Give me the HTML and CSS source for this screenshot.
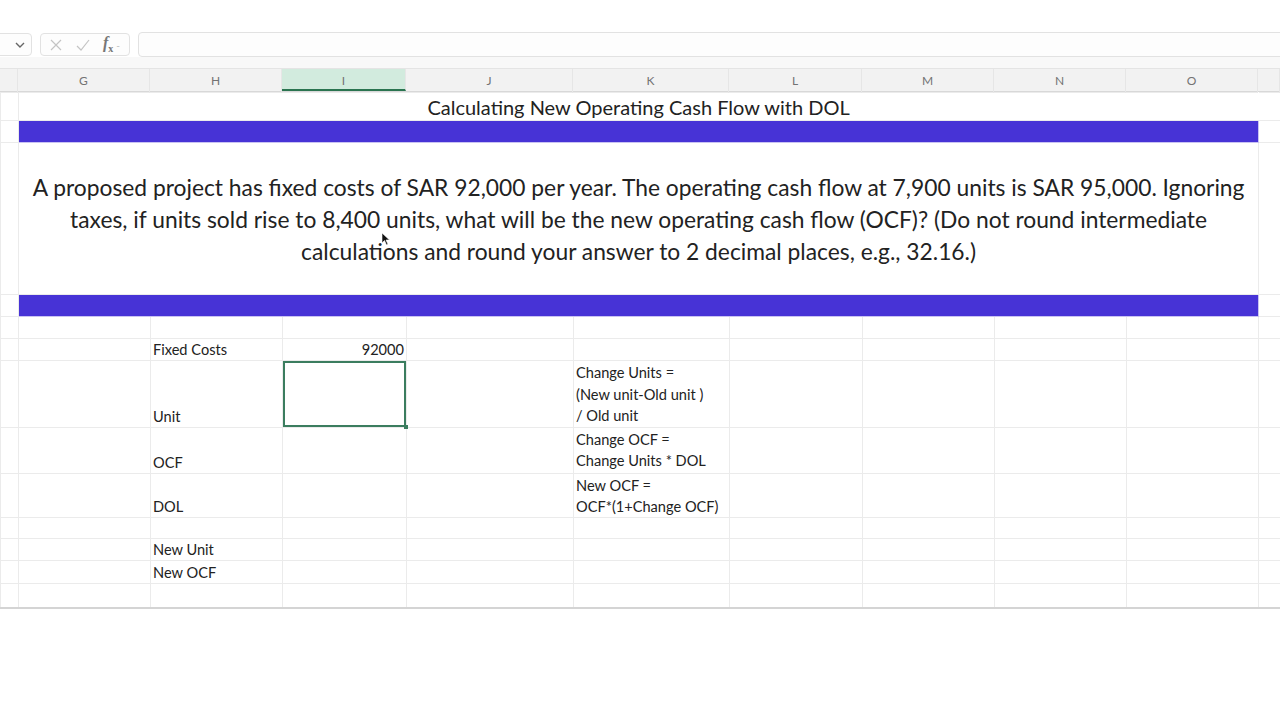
FILE: index.html
```html
<!DOCTYPE html>
<html lang="en">
<head>
    <meta charset="UTF-8">
    <meta name="viewport" content="width=device-width, initial-scale=1.0">
    <title>DOL - Operating Cash Flow</title>
    <link rel="stylesheet" href="styles.css">
</head>
<body>
    <div class="toolbar">
        <div class="name-box">
            <svg width="10" height="6" viewBox="0 0 10 6"><path d="M1 1 L5 5 L9 1" fill="none" stroke="#666" stroke-width="1.4"/></svg>
        </div>
        <div class="fx-box">
            <svg width="14" height="14" viewBox="0 0 14 14"><path d="M2 2 L12 12 M12 2 L2 12" stroke="#c4c4c4" stroke-width="1.2"/></svg>
            <svg width="16" height="14" viewBox="0 0 16 14"><path d="M2 8 L6 12 L14 2" fill="none" stroke="#c4c4c4" stroke-width="1.2"/></svg>
            <span class="fx"><i>f</i><sub>x</sub></span>
            <span class="fx-arrow">-</span>
        </div>
        <div class="formula-input"></div>
    </div>
    <div class="strip"></div>

    <div class="col-headers">
        <div class="col-head"></div>
        <div class="col-head">G</div>
        <div class="col-head">H</div>
        <div class="col-head active">I</div>
        <div class="col-head">J</div>
        <div class="col-head">K</div>
        <div class="col-head">L</div>
        <div class="col-head">M</div>
        <div class="col-head">N</div>
        <div class="col-head">O</div>
        <div class="col-head"></div>
    </div>

    <table class="sheet">
        <colgroup>
            <col style="width:18px"><col style="width:132px"><col style="width:132px"><col style="width:124px">
            <col style="width:167px"><col style="width:156px"><col style="width:133px"><col style="width:132px">
            <col style="width:132px"><col style="width:132px"><col style="width:22px">
        </colgroup>
        <tr class="r-title">
            <td></td>
            <td colspan="9" class="title">Calculating New Operating Cash Flow with DOL</td>
            <td></td>
        </tr>
        <tr class="r-band">
            <td></td>
            <td colspan="9" class="band"></td>
            <td></td>
        </tr>
        <tr class="r-question">
            <td></td>
            <td colspan="9" class="question">
                A proposed project has fixed costs of SAR 92,000 per year. The operating cash flow at 7,900 units is SAR 95,000. Ignoring<br>
                taxes, if units sold rise to 8,400 units, what will be the new operating cash flow (OCF)? (Do not round intermediate<br>
                calculations and round your answer to 2 decimal places, e.g., 32.16.)
            </td>
            <td></td>
        </tr>
        <tr class="r-band">
            <td></td>
            <td colspan="9" class="band"></td>
            <td></td>
        </tr>
        <tr class="r-22">
            <td></td><td></td><td></td><td></td><td></td><td></td><td></td><td></td><td></td><td></td><td></td>
        </tr>
        <tr class="r-22">
            <td></td><td></td><td>Fixed Costs</td><td class="num">92000</td><td></td><td></td><td></td><td></td><td></td><td></td><td></td>
        </tr>
        <tr class="r-unit">
            <td></td><td></td><td>Unit</td><td class="selected"></td><td></td>
            <td class="note">Change Units =<br>(New unit-Old unit )<br>/ Old unit</td>
            <td></td><td></td><td></td><td></td><td></td>
        </tr>
        <tr class="r-ocf">
            <td></td><td></td><td>OCF</td><td></td><td></td>
            <td class="note">Change OCF =<br>Change Units * DOL</td>
            <td></td><td></td><td></td><td></td><td></td>
        </tr>
        <tr class="r-dol">
            <td></td><td></td><td>DOL</td><td></td><td></td>
            <td class="note">New OCF =<br>OCF*(1+Change OCF)</td>
            <td></td><td></td><td></td><td></td><td></td>
        </tr>
        <tr class="r-21">
            <td></td><td></td><td></td><td></td><td></td><td></td><td></td><td></td><td></td><td></td><td></td>
        </tr>
        <tr class="r-22">
            <td></td><td></td><td>New Unit</td><td></td><td></td><td></td><td></td><td></td><td></td><td></td><td></td>
        </tr>
        <tr class="r-23">
            <td></td><td></td><td>New OCF</td><td></td><td></td><td></td><td></td><td></td><td></td><td></td><td></td>
        </tr>
        <tr class="r-24">
            <td></td><td></td><td></td><td></td><td></td><td></td><td></td><td></td><td></td><td></td><td></td>
        </tr>
    </table>

    <!-- mouse pointer resting over the question -->
    <svg class="pointer" width="10" height="14" viewBox="0 0 10 14">
        <path d="M1 1 L1 11 L3.5 8.5 L5.5 13 L7 12.3 L5 8 L8.5 8 Z" fill="#111" stroke="#fff" stroke-width="0.6"/>
    </svg>
</body>
</html>
```

FILE: styles.css
```css
body {
    margin: 0;
    background: #ffffff;
    font-family: 'Lato', 'Open Sans', sans-serif;
    color: #222;
    position: relative;
    overflow: hidden;
}
.toolbar {
    display: flex;
    align-items: center;
    gap: 8px;
    padding-top: 32px;
    height: 25px;
    margin-left: -4px;
}
.name-box, .fx-box, .formula-input {
    height: 23px;
    border: 1px solid #e2e2e2;
    border-radius: 4px;
    background: #fdfdfd;
    display: flex;
    align-items: center;
}
.name-box {
    width: 36px;
    justify-content: flex-end;
    padding-right: 6px;
    box-sizing: border-box;
}
.fx-box {
    width: 90px;
    box-sizing: border-box;
    padding-left: 8px;
    gap: 12px;
}
.fx {
    font-family: 'Liberation Serif', serif;
    font-size: 16px;
    color: #777;
    font-weight: bold;
}
.fx sub {
    font-size: 10px;
    font-style: normal;
}
.fx-arrow {
    color: #bbb;
    font-size: 10px;
    margin-left: -9px;
}
.formula-input {
    flex: 1;
    margin-right: -10px;
}
.strip {
    height: 11px;
    background: #f8f8f8;
}
.col-headers {
    display: grid;
    grid-template-columns: 18px 132px 132px 124px 167px 156px 133px 132px 132px 132px 1fr;
    height: 22px;
    background: #f2f2f2;
    border-top: 1px solid #e4e4e4;
    border-bottom: 1px solid #d8d8d8;
}
.col-head {
    font-size: 12px;
    color: #737373;
    text-align: center;
    line-height: 24px;
    border-right: 1px solid #e6e6e6;
}
.col-head.active {
    background: #d2ebde;
    border-bottom: 2px solid #2a7450;
    height: 20px;
}
.sheet {
    table-layout: fixed;
    width: 1280px;
    border-collapse: collapse;
    font-size: 14.6px;
}
.sheet td {
    border: 1px solid #ebebeb;
    padding: 0 2px;
    line-height: 20px;
    vertical-align: bottom;
    white-space: nowrap;
    overflow: visible;
}
.sheet td.num {
    text-align: right;
}
.sheet td.note {
    vertical-align: top;
    padding: 1px 2px 0;
    line-height: 21.5px;
}
.r-ocf td.note,
.r-dol td.note {
    line-height: 21px;
}
.sheet td.selected {
    position: relative;
    box-shadow: inset 0 0 0 2px #3b7d5f;
}
.sheet td.selected::after {
    content: "";
    position: absolute;
    right: -2px;
    bottom: -2px;
    width: 4px;
    height: 4px;
    background: #3b7d5f;
}
.r-title { height: 28px; }
.r-band { height: 22px; }
.r-question { height: 152px; }
.r-21 { height: 21px; }
.r-22 { height: 22px; }
.r-23 { height: 23px; }
.r-24 { height: 24px; }
.r-unit { height: 67px; }
.r-ocf { height: 46px; }
.r-dol { height: 44px; }
.sheet td.title {
    text-align: center;
    font-size: 20px;
    line-height: 24px;
    vertical-align: middle;
    border-left-color: #fff;
    border-right-color: #fff;
}
.sheet td.band {
    background: #4733d6;
    border: 1px solid #c9c3f2;
}
.sheet td.question {
    text-align: center;
    vertical-align: middle;
    font-size: 22.8px;
    line-height: 32px;
    background: #fff;
}
.sheet tr:last-child td {
    border-bottom: 2px solid #d4d4d4;
}
.pointer {
    position: absolute;
    left: 381px;
    top: 232px;
}
```
